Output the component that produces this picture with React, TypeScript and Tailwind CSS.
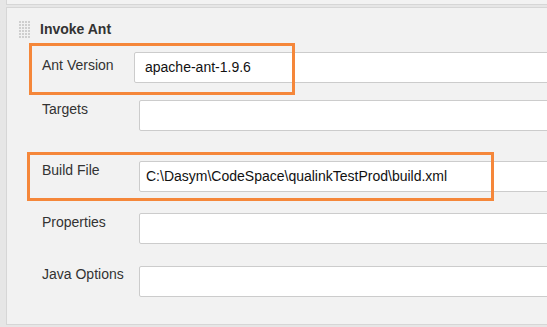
import React from "react";

const rows = [
  { label: "Ant Version", value: "apache-ant-1.9.6", mt: "mt-[13px]", labelW: "w-[92px]", labelPt: "pt-[5px]", textPl: "pl-[10px]" },
  { label: "Targets", value: "", mt: "mt-[17px]", labelW: "w-[97px]", labelPt: "pt-[1px]", textPl: "pl-[6px]" },
  { label: "Build File", value: "C:\\Dasym\\CodeSpace\\qualinkTestProd\\build.xml", mt: "mt-[30px]", labelW: "w-[97px]", labelPt: "pt-[1px]", textPl: "pl-[6px]" },
  { label: "Properties", value: "", mt: "mt-[21px]", labelW: "w-[97px]", labelPt: "pt-[1px]", textPl: "pl-[6px]" },
  { label: "Java Options", value: "", mt: "mt-[22px]", labelW: "w-[97px]", labelPt: "pt-0", textPl: "pl-[6px]" },
];

const DragHandle = () => {
  const dots = [];
  for (let r = 0; r < 6; r++) {
    for (let c = 0; c < 4; c++) {
      dots.push(<rect key={`${r}-${c}`} x={c * 3} y={r * 3} width="2" height="2" fill="#cfcfcf" />);
    }
  }
  return (
    <svg width="12" height="17" viewBox="0 0 12 17">
      {dots}
    </svg>
  );
};

export default function App() {
  return (
    <div
      className="relative w-[547px] h-[327px] overflow-hidden bg-[#e6e6e6]"
      style={{ fontFamily: '"Liberation Sans", Arial, sans-serif' }}
    >
      {/* previous step (cut off) */}
      <div className="ml-[6px] w-[700px] h-[5px] bg-[#f2f2f2] border-l border-b border-[#d6d6d6]"></div>
      <div className="h-[2px]"></div>

      {/* Invoke Ant step */}
      <div className="ml-[6px] w-[700px] h-[318px] bg-[#f2f2f2] border border-[#d6d6d6]">
        <div className="mt-[11px] h-[20px] flex items-center pl-[12px] gap-[9px]">
          <DragHandle />
          <span className="text-[14px] font-bold text-[#333333] leading-4">Invoke Ant</span>
        </div>

        {rows.map((row) => (
          <div key={row.label} className={`${row.mt} flex items-start pl-[35px]`}>
            <div className={`${row.labelW} ${row.labelPt} shrink-0 text-[14px] leading-4 text-[#333333]`}>
              {row.label}
            </div>
            <div
              className={`flex-1 h-[31px] bg-white border border-[#cccccc] rounded-[2px] flex items-center ${row.textPl} text-[14px] text-[#111111]`}
            >
              {row.value}
            </div>
          </div>
        ))}
      </div>

      {/* highlight annotations */}
      <div className="absolute left-[29px] top-[43px] w-[266px] h-[52px] border-[3px] border-[#f5873a]"></div>
      <div className="absolute left-[27px] top-[152px] w-[467px] h-[49px] border-[3px] border-[#f5873a]"></div>
    </div>
  );
}
